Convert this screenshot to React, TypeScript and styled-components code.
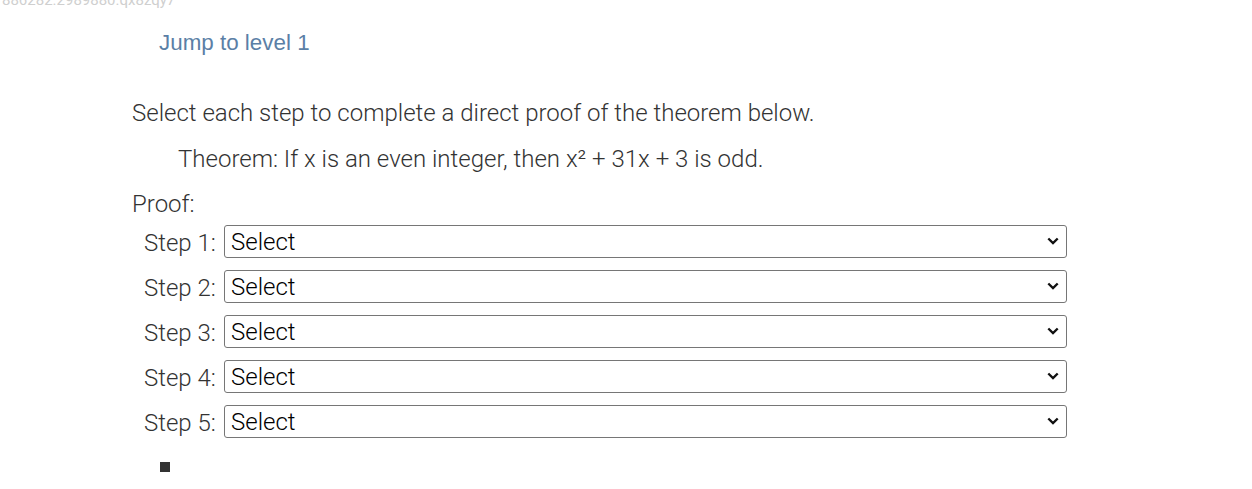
import React from "react";
import styled, { createGlobalStyle } from "styled-components";

const GlobalStyle = createGlobalStyle`
  html, body {
    margin: 0;
    padding: 0;
    background: #ffffff;
  }
  body {
    font-family: Roboto, "Liberation Sans", sans-serif;
    overflow: hidden;
  }
`;

const steps = [1, 2, 3, 4, 5];

export default function App() {
  return (
    <Page>
      <GlobalStyle />
      <ActivityId>886282.2989880.qx8zqy7</ActivityId>
      <JumpLink href="#">Jump to level 1</JumpLink>
      <Content>
        <Prompt>Select each step to complete a direct proof of the theorem below.</Prompt>
        <Theorem>
          Theorem: If x is an even integer, then x² + 31x + 3 is odd.
        </Theorem>
        <ProofLabel>Proof:</ProofLabel>
        <StepList>
          {steps.map((n) => (
            <StepRow key={n}>
              <StepLabel>Step {n}:</StepLabel>
              <SelectWrap>
                <StepSelect defaultValue="">
                  <option value="">Select</option>
                </StepSelect>
                <Chevron viewBox="0 0 12 8" aria-hidden="true">
                  <path d="M1.3 1.5 L6 6 L10.7 1.5" />
                </Chevron>
              </SelectWrap>
            </StepRow>
          ))}
        </StepList>
        <QedMark />
      </Content>
    </Page>
  );
}

const Page = styled.div`
  width: 1252px;
  height: 489px;
  overflow: hidden;
`;

const ActivityId = styled.div`
  margin-top: -9px;
  padding-left: 2px;
  font-family: Roboto, sans-serif;
  font-size: 15px;
  line-height: 18px;
  color: #cfcfcf;
`;

const JumpLink = styled.a`
  display: block;
  width: fit-content;
  margin: 22px 0 0 159px;
  font-family: "Liberation Sans", Arial, sans-serif;
  font-size: 22.4px;
  line-height: 24px;
  color: #5b7fa6;
  text-decoration: none;
`;

const Content = styled.div`
  padding: 43px 0 0 132px;
  font-family: Roboto, sans-serif;
  font-weight: 300;
  font-size: 24px;
  color: #333333;
`;

const Prompt = styled.p`
  margin: 0;
  line-height: 30px;
`;

const Theorem = styled.p`
  margin: 16px 0 0 46px;
  line-height: 30px;
`;

const ProofLabel = styled.p`
  margin: 15px 0 0 0;
  line-height: 30px;
`;

const StepList = styled.div`
  display: flex;
  flex-direction: column;
  gap: 12px;
  margin-top: 6px;
  padding-left: 12px;
`;

const StepRow = styled.div`
  display: flex;
  align-items: center;
  gap: 8px;
  height: 33px;
`;

const StepLabel = styled.span`
  width: 72px;
  padding-top: 4px;
  line-height: 29px;
  white-space: nowrap;
`;

const SelectWrap = styled.div`
  position: relative;
  width: 843px;
`;

const StepSelect = styled.select`
  appearance: none;
  display: block;
  width: 100%;
  height: 33px;
  padding: 0 30px 0 6px;
  border: 1px solid #767676;
  border-radius: 3px;
  background: #ffffff;
  font-family: Roboto, sans-serif;
  font-weight: 300;
  font-size: 24px;
  color: #000000;
`;

const Chevron = styled.svg`
  position: absolute;
  right: 8px;
  top: 12px;
  width: 12px;
  height: 8px;
  pointer-events: none;
  fill: none;
  stroke: #111111;
  stroke-width: 2.4;
`;

const QedMark = styled.div`
  width: 10px;
  height: 10px;
  margin: 24px 0 0 28px;
  background: #333333;
`;
